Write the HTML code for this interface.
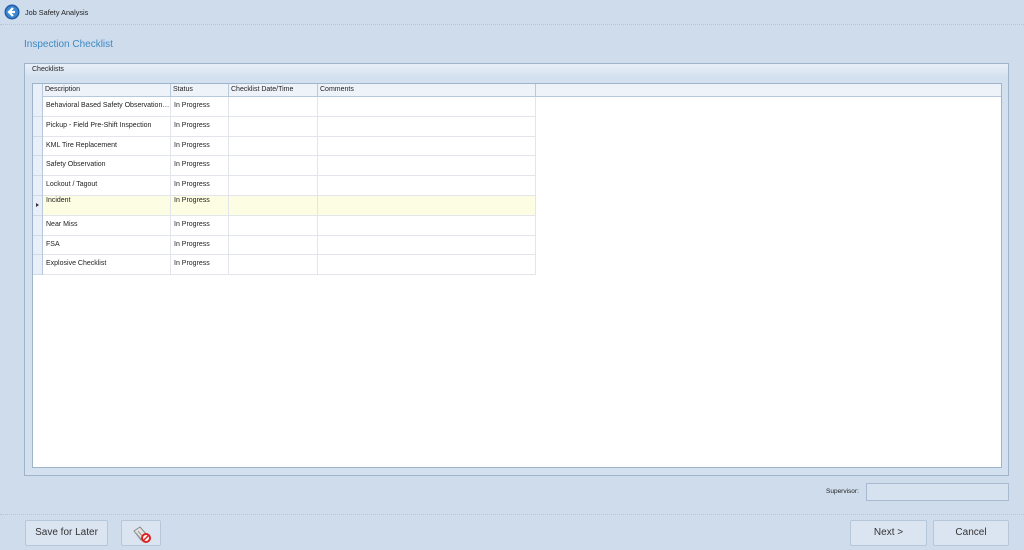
<!DOCTYPE html><html><head><style>
body{margin:0;width:1024px;height:550px;background:#cfdcec;font-family:"Liberation Sans",sans-serif;position:relative;overflow:hidden}
.a{position:absolute}
.t{font-size:8px;color:#222;white-space:nowrap}
.row{position:absolute;left:33px;width:503px;border-bottom:1px solid #e2e6ec;background:#fff;box-sizing:border-box}
.row div{position:absolute;top:0;bottom:0;border-right:1px solid #e2e6ec;font-size:7px;color:#222;line-height:18px;padding-left:3px;box-sizing:border-box;white-space:nowrap;overflow:hidden;text-overflow:ellipsis}
.btn{position:absolute;background:#dbe5f1;border:1px solid #b7c7da;border-radius:2px;font-size:10px;color:#333;text-align:center;box-sizing:border-box}
</style></head><body>
<svg class="a" style="left:4px;top:4px" width="16" height="16"><circle cx="8" cy="8" r="7.5" fill="#1f5ea8"/><circle cx="8" cy="8" r="6" fill="#3d86d0"/><path d="M9 4L5 8l4 4M5 8h6" stroke="#fff" stroke-width="2.2" fill="none"/></svg>
<div class="a t" style="left:25px;top:8px;font-size:7.3px">Job Safety Analysis</div>
<div class="a" style="left:0;top:24px;width:1024px;border-top:1px dotted #b5c4d6"></div>
<div class="a" style="left:24px;top:39px;font-size:10px;color:#3b8ac4">Inspection Checklist</div>
<div class="a" style="left:24px;top:63px;width:985px;height:413px;border:1px solid #9fb3ca;box-sizing:border-box;background:#d3e0ef"></div>
<div class="a" style="left:25px;top:64px;width:983px;height:12px;background:linear-gradient(#e7eff8,#d6e2f0)"></div>
<div class="a t" style="left:32px;top:66px;font-size:7px">Checklists</div>
<div class="a" style="left:32px;top:83px;width:970px;height:385px;background:#fff;border:1px solid #9fb3ca;box-sizing:border-box"></div>
<div class="a" style="left:33px;top:84px;width:968px;height:12px;background:#eef3fa;border-bottom:1px solid #b9c9dc"></div>
<div class="a" style="left:33px;top:84px;width:9px;height:191px;background:#e9eff8;border-right:1px solid #b9c9dc"></div>
<div class="a" style="left:170px;top:84px;height:12px;border-left:1px solid #b9c9dc"></div>
<div class="a" style="left:228px;top:84px;height:12px;border-left:1px solid #b9c9dc"></div>
<div class="a" style="left:317px;top:84px;height:12px;border-left:1px solid #b9c9dc"></div>
<div class="a" style="left:535px;top:84px;height:12px;border-left:1px solid #b9c9dc"></div>
<div class="a t" style="left:45px;top:86px;font-size:7px">Description</div>
<div class="a t" style="left:173px;top:86px;font-size:7px">Status</div>
<div class="a t" style="left:231px;top:86px;font-size:7px">Checklist Date/Time</div>
<div class="a t" style="left:320px;top:86px;font-size:7px">Comments</div>
<div id="rows"></div>
<script>
var n=["Behavioral Based Safety Observation Checklist","Pickup - Field Pre-Shift Inspection","KML Tire Replacement","Safety Observation","Lockout / Tagout","Incident","Near Miss","FSA","Explosive Checklist"],h="";
var T=[97,117,137,156,176,196,216,236,255,275];
for(var i=0;i<9;i++){var y=T[i],hh=T[i+1]-y;var inc=i==5;h+='<div class="row" style="top:'+y+'px;height:'+hh+'px;left:43px;width:493px;'+(inc?'background:#fdfde3':'')+'"><div style="left:0;width:128px;'+(inc?'line-height:10px':'')+'">'+n[i]+'</div><div style="left:128px;width:58px;'+(inc?'line-height:10px':'')+'">In Progress</div><div style="left:186px;width:89px"></div><div style="left:275px;width:218px"></div></div><div class="a" style="left:33px;top:'+(y+hh-1)+'px;width:9px;border-top:1px solid #d0dae6"></div>';}
document.getElementById("rows").innerHTML=h;
</script>
<div class="a" style="left:36px;top:203px;width:0;height:0;border-left:3px solid #333;border-top:2px solid transparent;border-bottom:2px solid transparent"></div>
<div class="a t" style="left:826px;top:488px;font-size:6.5px">Supervisor:</div>
<div class="a" style="left:866px;top:483px;width:143px;height:18px;border:1px solid #a9bbd0;box-sizing:border-box;background:#d6e2f0"></div>
<div class="a" style="left:0;top:514px;width:1024px;border-top:1px dotted #b5c4d6"></div>
<div class="btn" style="left:25px;top:520px;width:83px;height:26px;line-height:24px">Save for Later</div>
<div class="btn" style="left:121px;top:520px;width:40px;height:26px"><svg width="38" height="24"><path d="M12 10l6-4 7 8-6 5z" fill="#e4e4e4" stroke="#888"/><path d="M14 12l5 6M16 10l5 6" stroke="#999"/><circle cx="24" cy="17" r="4" fill="#fff" stroke="#d22" stroke-width="2"/><path d="M21 20l6-6" stroke="#d22" stroke-width="1.5"/></svg></div>
<div class="btn" style="left:850px;top:520px;width:77px;height:26px;line-height:24px">Next &gt;</div>
<div class="btn" style="left:933px;top:520px;width:76px;height:26px;line-height:24px">Cancel</div>
</body></html>
